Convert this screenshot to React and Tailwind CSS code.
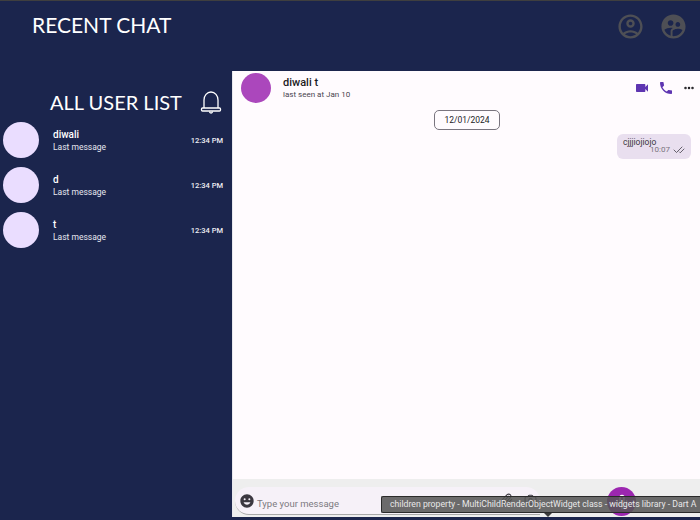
import { CheckCheck, Camera, Mic, MoreHorizontal, Paperclip } from "lucide-react";

const users = ["diwali", "d", "t"];

function UserRow({ name }) {
  return (
    <div className="flex h-[45px] items-center pl-[3px] pr-[9px]">
      <div className="h-9 w-9 shrink-0 rounded-full bg-[#eaddff]" />
      <div className="ml-[14px] flex-1 pt-[2px]">
        <p className="text-[10px] leading-[13px] font-medium text-white">{name}</p>
        <p className="text-[8.5px] leading-[12px] text-[#e8e8f0]">Last message</p>
      </div>
      <span className="pt-[3px] text-[7.5px] font-medium text-[#f0f0f5]">12:34 PM</span>
    </div>
  );
}

export default function App() {
  return (
    <div className="relative flex h-[520px] w-[700px] flex-col overflow-hidden bg-[#1b254d] font-['Roboto',sans-serif]">
      <div className="h-px shrink-0 bg-[#3f3f3f]" />

      {/* Recent chat header */}
      <div className="flex h-[70px] shrink-0 items-start justify-between pl-8 pr-[12px]">
        <h1 className="mt-[9px] font-['Lato',sans-serif] text-[21px] leading-[30px] text-white">
          RECENT CHAT
        </h1>
        <div className="mt-[11px] flex items-center gap-[14px]">
          <svg width="29" height="29" viewBox="0 0 24 24" fill="#4e4f55">
            <path d="M12 2C6.48 2 2 6.48 2 12s4.48 10 10 10 10-4.48 10-10S17.52 2 12 2zM7.35 18.5C8.66 17.56 10.26 17 12 17s3.34.56 4.65 1.5C15.34 19.44 13.74 20 12 20s-3.34-.56-4.65-1.5zm10.79-1.38C16.45 15.8 14.32 15 12 15s-4.45.8-6.14 2.12C4.7 15.73 4 13.95 4 12c0-4.42 3.58-8 8-8s8 3.58 8 8c0 1.95-.7 3.73-1.86 5.12z" />
            <path d="M12 6c-1.93 0-3.5 1.57-3.5 3.5S10.07 13 12 13s3.5-1.57 3.5-3.5S13.93 6 12 6zm0 5c-.83 0-1.5-.67-1.5-1.5S11.17 8 12 8s1.5.67 1.5 1.5S12.83 11 12 11z" />
          </svg>
          <svg width="29" height="29" viewBox="0 0 24 24" fill="#4e4f55">
            <path d="M11.99 2c-5.52 0-10 4.48-10 10s4.48 10 10 10 10-4.48 10-10-4.48-10-10-10zm3.61 6.34c1.07 0 1.93.86 1.93 1.93 0 1.07-.86 1.93-1.93 1.93-1.07 0-1.93-.86-1.93-1.93-.01-1.07.86-1.93 1.93-1.93zm-6-1.58c1.3 0 2.36 1.06 2.36 2.36 0 1.3-1.06 2.36-2.36 2.36s-2.36-1.06-2.36-2.36c0-1.31 1.05-2.36 2.36-2.36zm0 9.13v3.75c-2.4-.75-4.3-2.6-5.14-4.96 1.05-1.12 3.67-1.69 5.14-1.69.53 0 1.2.08 1.9.22-1.64.87-1.9 2.02-1.9 2.68zM11.99 20c-.27 0-.53-.01-.79-.04v-4.07c0-1.42 2.94-2.13 4.4-2.13 1.07 0 2.92.39 3.84 1.15-1.17 2.97-4.06 5.09-7.45 5.09z" />
          </svg>
        </div>
      </div>

      <div className="flex min-h-0 flex-1">
        {/* User list */}
        <aside className="w-[232px] shrink-0">
          <div className="flex h-[46px] items-center pl-[50px] pt-[15px]">
            <h2 className="font-['Lato',sans-serif] text-[20px] text-white">ALL USER LIST</h2>
            <svg className="ml-[18px]" width="22" height="24" viewBox="0 0 22 24" fill="none" stroke="white" strokeWidth="1.3">
              <path d="M4 18V10c0-4.5 3-8 7-8s7 3.500 7 8v8" />
              <rect x="1.500" y="18" width="19" height="3" rx="1" />
              <path d="M9.500 21.500a1.500 1.500 0 0 0 3 0" />
            </svg>
          </div>
          <div>
            {users.map((name) => (
              <UserRow key={name} name={name} />
            ))}
          </div>
        </aside>

        {/* Conversation */}
        <main className="mb-[3px] flex min-w-0 flex-1 flex-col border-l border-[#e8e8ee] bg-[#fffbfe]">
          <div className="flex h-[39px] shrink-0 items-start pl-[8px] pr-[5px] pt-[2px]">
            <div className="h-[30px] w-[30px] rounded-full bg-[#ab47bc]" />
            <div className="ml-[12px] flex-1 pt-[3px]">
              <p className="text-[11px] leading-[14px] font-medium text-[#1c1b1f]">diwali t</p>
              <p className="-mt-[1px] text-[8px] leading-[11px] text-[#49454f]">last seen at Jan 10</p>
            </div>
            <div className="flex h-[30px] items-center">
              <svg width="16" height="16" viewBox="0 0 24 24" fill="#5e35b1">
                <path d="M17 10.500V7c0-.55-.45-1-1-1H4c-.55 0-1 .45-1 1v10c0 .55.45 1 1 1h12c.55 0 1-.45 1-1v-3.500l4 4v-11l-4 4z" />
              </svg>
              <svg className="ml-[8px]" width="16" height="16" viewBox="0 0 24 24" fill="#5e35b1">
                <path d="M6.620 10.790c1.440 2.830 3.760 5.140 6.590 6.590l2.200-2.200c.27-.27.67-.36 1.020-.24 1.120.37 2.330.57 3.570.57.55 0 1 .45 1 1V20c0 .55-.45 1-1 1-9.390 0-17-7.610-17-17 0-.55.45-1 1-1h3.500c.55 0 1 .45 1 1 0 1.250.2 2.450.57 3.570.11.35.03.74-.25 1.020l-2.200 2.200z" />
              </svg>
              <MoreHorizontal className="ml-[9px] h-[12px] w-[12px] text-[#1c1b1f]" strokeWidth={3} />
            </div>
          </div>

          <div className="flex justify-center pl-[1px]">
            <span className="rounded-[5px] border border-[#79747e] px-[9px] py-[2px] text-[8.5px] leading-[14px] text-[#1c1b1f]">
              12/01/2024
            </span>
          </div>

          <div className="mt-[4px] flex justify-end pr-[9px]">
            <div className="h-[25px] w-[74px] rounded-[6px] bg-[#e9dfef] px-[6px] pt-[3px]">
              <p className="text-[8.5px] leading-[10px] text-[#3a3740]">cjjjiojiojo</p>
              <div className="-mt-[2px] flex h-[10px] items-center justify-end gap-[3px] text-[8px] text-[#79747e]">
                10:07
                <CheckCheck className="h-[12px] w-[12px] text-[#3a3740]" strokeWidth={1.5} />
              </div>
            </div>
          </div>

          <div className="flex-1" />

          {/* Composer */}
          <div className="flex h-[38px] shrink-0 items-start bg-[#eeeeee] pl-[2px] pr-[160px] pt-[8px]">
            <div className="flex h-[28px] flex-1 items-start rounded-l-[14px] rounded-tr-[14px] border-b border-[#a8a8a8] bg-[#f6f1f8] pl-[4px] pr-[3px] pt-[6px]">
              <svg width="16" height="16" viewBox="0 0 24 24" fill="#3b3840">
                <path d="M12 2C6.470 2 2 6.480 2 12s4.470 10 10 10 10-4.480 10-10S17.530 2 12 2zM8.500 8a1.500 1.500 0 1 1 0 3 1.500 1.500 0 0 1 0-3zm7 0a1.500 1.500 0 1 1 0 3 1.500 1.500 0 0 1 0-3zM12 17.500c-2.330 0-4.310-1.460-5.110-3.500h10.220c-.8 2.040-2.780 3.500-5.110 3.500z" />
              </svg>
              <span className="ml-[2px] mt-[4px] flex-1 text-[9.500px] leading-[14px] text-[#7c7a80]">Type your message</span>
              <Paperclip className="h-[13px] w-[13px] text-[#3b3840]" />
              <Camera className="ml-[11px] h-[13px] w-[13px] text-[#3b3840]" />
            </div>
          </div>
        </main>
      </div>

      {/* Send button, under the browser tooltip */}
      <div className="absolute left-[607px] top-[487px] flex h-[29px] w-[29px] items-center justify-center rounded-full bg-[#9c27b0]">
        <Mic className="h-4 w-4 text-white" />
      </div>

      {/* Browser link tooltip */}
      <div className="absolute left-[381px] top-[496px] flex h-[17px] w-[319px] items-center whitespace-nowrap rounded-l-[2px] border-y border-l border-[#2a2a2a] bg-[#555555dd] pl-[8px] text-[8.700px] text-[#e8e8e8]">
        children property - MultiChildRenderObjectWidget class - widgets library - Dart A
      </div>
      <div className="absolute left-[544px] top-[513px] h-0 w-0 border-x-[4px] border-t-[4px] border-x-transparent border-t-[#3a3a3a]" />
    </div>
  );
}
